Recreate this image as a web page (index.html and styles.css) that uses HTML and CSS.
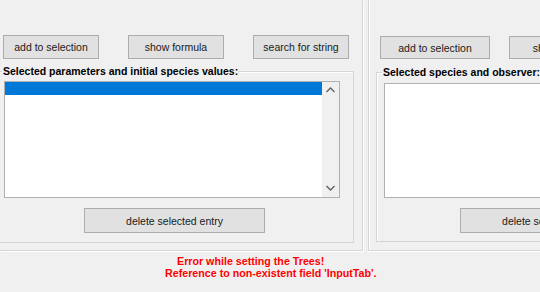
FILE: index.html
```html
<!DOCTYPE html>
<html>
<head>
<meta charset="utf-8">
<link rel="stylesheet" href="styles.css">
</head>
<body>
<div class="app">
  <div class="panels">
    <div class="panel panel-left">
      <div class="btn-row btn-row-left">
        <button class="btn btn-l">add to selection</button>
        <button class="btn btn-l">show formula</button>
        <button class="btn btn-l">search for string</button>
      </div>
      <div class="group group-left">
        <span class="group-label">Selected parameters and initial species values:</span>
        <div class="listbox listbox-left">
          <div class="list-items">
            <div class="list-sel"></div>
          </div>
          <div class="scrollbar">
            <svg class="arrow" width="17" height="14" viewBox="0 0 17 14"><path d="M4.5 9 L8.5 5 L12.5 9" fill="none" stroke="#606060" stroke-width="1.3"/></svg>
            <svg class="arrow" width="17" height="14" viewBox="0 0 17 14"><path d="M4.5 5 L8.5 9 L12.5 5" fill="none" stroke="#606060" stroke-width="1.3"/></svg>
          </div>
        </div>
        <div class="del-row del-row-left">
          <button class="btn btn-del">delete selected entry</button>
        </div>
      </div>
    </div>
    <div class="panel panel-right">
      <div class="btn-row btn-row-right">
        <button class="btn btn-r">add to selection</button>
        <button class="btn btn-r">show formula</button>
      </div>
      <div class="group group-right">
        <span class="group-label">Selected species and observer:</span>
        <div class="listbox listbox-right"></div>
        <div class="del-row del-row-right">
          <button class="btn btn-del">delete selected entry</button>
        </div>
      </div>
    </div>
  </div>
  <div class="error">
    <div class="err-line err-1">Error while setting the Trees!</div>
    <div class="err-line err-2">Reference to non-existent field 'InputTab'.</div>
  </div>
</div>
</body>
</html>
```

FILE: styles.css
```css
html, body {
  margin: 0;
  padding: 0;
  background: #f0f0f0;
  overflow: hidden;
}
body {
  font-family: "Liberation Sans", Arial, sans-serif;
  font-size: 10.5px;
  color: #000;
}
.app {
  width: 540px;
  height: 292px;
  background: #f0f0f0;
  overflow: hidden;
}
.panels {
  display: flex;
  gap: 5px;
  height: 251px;
}
.panel {
  box-sizing: border-box;
  height: 251px;
  border-bottom: 1px solid #d5d5d5;
  box-shadow: 0 1px 0 #ffffff;
}
.panel-left {
  width: 363px;
  flex: none;
  border-right: 1px solid #d5d5d5;
  padding-top: 35px;
  box-shadow: 1px 1px 0 #ffffff;
}
.panel-right {
  flex: 1;
  min-width: 0;
  border-left: 1px solid #d5d5d5;
  padding-top: 36px;
  padding-left: 11px;
  box-shadow: inset 1px 0 0 #ffffff, 0 1px 0 #ffffff;
}
.btn-row {
  display: flex;
}
.btn-row-left {
  gap: 29px;
  padding-left: 3px;
  height: 24px;
}
.btn-row-right {
  gap: 19px;
  height: 23px;
}
.btn {
  box-sizing: border-box;
  margin: 0;
  padding: 0;
  background: #e1e1e1;
  border: 1px solid #adadad;
  border-radius: 0;
  font-family: "Liberation Sans", Arial, sans-serif;
  font-size: 10.5px;
  color: #1a1a1a;
  white-space: nowrap;
  overflow: hidden;
  flex: none;
}
.btn-l {
  width: 96px;
  height: 24px;
}
.btn-r {
  width: 110px;
  height: 23px;
}
.btn-del {
  width: 181px;
  height: 25px;
}
.group {
  position: relative;
  box-sizing: border-box;
  border: 1px solid #d5d5d5;
  box-shadow: inset 1px 1px 0 #ffffff;
}
.group-left {
  margin-left: -2px;
  width: 356px;
  margin-top: 12px;
  padding: 9px 0 9px 5px;
}
.group-right {
  margin-left: -4px;
  margin-top: 13px;
  margin-right: -20px;
  padding: 10px 0 8px 7px;
}
.group-label {
  position: absolute;
  top: -8px;
  left: 3px;
  padding: 0 1px;
  background: #f0f0f0;
  font-weight: bold;
  font-size: 10.5px;
  line-height: 14px;
  white-space: nowrap;
  color: #000;
}
.group-right .group-label {
  left: 5px;
}
.listbox {
  box-sizing: border-box;
  background: #ffffff;
  border: 1px solid #b0b0b0;
}
.listbox-left {
  width: 336px;
  height: 117px;
  display: flex;
}
.listbox-right {
  height: 115px;
  margin-right: 0;
}
.list-items {
  flex: 1;
}
.list-sel {
  height: 13px;
  background: #0078d7;
}
.scrollbar {
  width: 17px;
  flex: none;
  background: #f0f0f0;
  display: flex;
  flex-direction: column;
  justify-content: space-between;
  padding: 1px 0 2px;
  box-sizing: border-box;
}
.arrow {
  display: block;
}
.del-row {
  display: flex;
  margin-top: 10px;
}
.del-row-left {
  padding-left: 80px;
}
.del-row-right {
  padding-left: 76px;
}
.error {
  padding-top: 4px;
  color: #ff0000;
  font-weight: bold;
  font-size: 10.7px;
  line-height: 12px;
  white-space: nowrap;
}
.err-1 {
  padding-left: 177px;
}
.err-2 {
  padding-left: 165px;
}
```
